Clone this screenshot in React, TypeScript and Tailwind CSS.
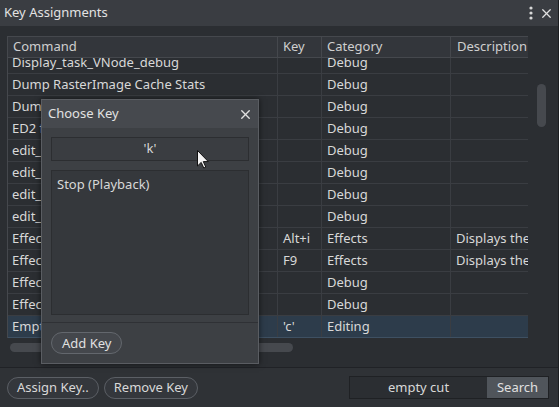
import { X } from "lucide-react";

type Row = { cmd: string; key?: string; cat: string; desc?: string; selected?: boolean };

const rows: Row[] = [
  { cmd: "Display_task_VNode_debug", cat: "Debug" },
  { cmd: "Dump RasterImage Cache Stats", cat: "Debug" },
  { cmd: "Dump RasterImage Cache", cat: "Debug" },
  { cmd: "ED2 fastpath", cat: "Debug" },
  { cmd: "edit_mode_1", cat: "Debug" },
  { cmd: "edit_mode_2", cat: "Debug" },
  { cmd: "edit_mode_3", cat: "Debug" },
  { cmd: "edit_mode_4", cat: "Debug" },
  { cmd: "Effects Editor", key: "Alt+i", cat: "Effects", desc: "Displays the effects editor" },
  { cmd: "Effects Manager", key: "F9", cat: "Effects", desc: "Displays the effects manager" },
  { cmd: "Effects Debug 1", cat: "Debug" },
  { cmd: "Effects Debug 2", cat: "Debug" },
  { cmd: "Empty Cut", key: "'c'", cat: "Editing", selected: true },
];

const cols = "grid grid-cols-[270px_44px_129px_78px]";

export default function App() {
  return (
    <div
      className="relative w-[559px] h-[407px] overflow-hidden bg-[#2b2e32] text-[13px] text-[#d8d8d8] flex flex-col border-r border-[#1c1e21]"
      style={{ fontFamily: '"Noto Sans", "Open Sans", sans-serif' }}
    >
      {/* title bar */}
      <div className="h-[26px] shrink-0 bg-[#3a3d42] flex items-center justify-between pl-[4px] pr-[4px]">
        <span className="text-[13px] text-[#e2e2e2]">Key Assignments</span>
        <div className="flex items-center gap-[6px] text-[#e0e0e0]">
          <svg width="4" height="14" viewBox="0 0 4 14">
            <circle cx="2" cy="2" r="1.6" fill="#d8d8d8" />
            <circle cx="2" cy="7" r="1.6" fill="#d8d8d8" />
            <circle cx="2" cy="12" r="1.6" fill="#d8d8d8" />
          </svg>
          <X size={15} strokeWidth={2} />
        </div>
      </div>

      {/* table area */}
      <div className="flex-1 flex pl-[7px] pt-[10px]">
        <div className="w-[521px] flex flex-col">
          <div className="border-l border-t border-[#45484d] h-[302px] flex flex-col overflow-hidden">
            <div className={`${cols} h-[21px] shrink-0 bg-[#33363b] border-b border-[#45484d] text-[#cfcfcf]`}>
              <div className="pl-[5px] flex items-center border-r border-[#45484d]">Command</div>
              <div className="pl-[5px] flex items-center border-r border-[#45484d]">Key</div>
              <div className="pl-[5px] flex items-center border-r border-[#45484d]">Category</div>
              <div className="pl-[6px] flex items-center">Description</div>
            </div>
            <div className="flex-1 overflow-hidden">
              <div className="-mt-[6px]">
                {rows.map((r, i) => (
                  <div
                    key={i}
                    className={`${cols} h-[22px] border-b ${r.selected ? "bg-[#2d3c4b] border-[#3e5062]" : "border-[#3a3d42]"}`}
                  >
                    <div className="pl-[4px] flex items-center border-r border-[#3a3d42] whitespace-nowrap overflow-hidden">{r.cmd}</div>
                    <div className="pl-[5px] flex items-center border-r border-[#3a3d42] whitespace-nowrap overflow-hidden">{r.key}</div>
                    <div className="pl-[5px] flex items-center border-r border-[#3a3d42]">{r.cat}</div>
                    <div className="pl-[5px] flex items-center whitespace-nowrap overflow-hidden">{r.desc}</div>
                  </div>
                ))}
              </div>
            </div>
          </div>
          {/* horizontal scrollbar */}
          <div className="h-[18px] flex items-center pl-[3px]">
            <div className="w-[283px] h-[9px] rounded-full bg-[#46494e]" />
          </div>
        </div>
        {/* vertical scrollbar */}
        <div className="w-[24px] pt-[48px] flex justify-center pl-[2px]">
          <div className="w-[9px] h-[43px] rounded-full bg-[#46494e]" />
        </div>
      </div>

      {/* bottom bar */}
      <div className="h-[40px] shrink-0 border-t border-[#202226] bg-[#2f3236] flex items-center justify-between pl-[7px] pr-[9px]">
        <div className="flex gap-[5px]">
          <button className="h-[22px] px-[9px] rounded-full border border-[#5b5f65] bg-[#34373c] text-[#d8d8d8] leading-none">Assign Key..</button>
          <button className="h-[22px] px-[9px] rounded-full border border-[#5b5f65] bg-[#34373c] text-[#d8d8d8] leading-none">Remove Key</button>
        </div>
        <div className="flex h-[23px] border border-[#1f2124]">
          <div className="w-[137px] bg-[#2b2e32] flex items-center justify-center text-[#d8d8d8]">empty cut</div>
          <div className="w-[61px] bg-[#50555b] flex items-center justify-center text-[#e0e0e0]">Search</div>
        </div>
      </div>

      {/* Choose Key dialog */}
      <div className="absolute left-[41px] top-[99px] w-[218px] h-[265px] bg-[#3d4044] border border-[#5a5d62] shadow-[0_0_6px_rgba(0,0,0,0.6)] flex flex-col">
        <div className="h-[28px] shrink-0 bg-[#46494e] flex items-center justify-between pl-[6px] pr-[5px]">
          <span className="text-[13px] text-[#e2e2e2]">Choose Key</span>
          <X size={15} strokeWidth={2.2} className="text-[#e0e0e0]" />
        </div>
        <div className="flex-1 flex flex-col px-[9px] pt-[9px]">
          <div className="h-[24px] shrink-0 bg-[#3a3d41] border border-[#2c2e31] flex items-center justify-center text-[#d8d8d8]">'k'</div>
          <div className="mt-[9px] h-[145px] bg-[#35383c] border border-[#2c2e31] pl-[5px] pt-[4px] text-[#d8d8d8]">Stop (Playback)</div>
        </div>
        <div className="h-[41px] shrink-0 border-t border-[#2f3135] flex items-center pl-[9px]">
          <button className="h-[22px] px-[10px] rounded-full border border-[#63676d] bg-[#44474c] text-[#e0e0e0] leading-none">Add Key</button>
        </div>
      </div>

      {/* mouse cursor */}
      <svg className="absolute left-[197px] top-[150px]" width="12" height="19" viewBox="0 0 12 19">
        <path d="M0.5 0.5 L0.5 16 L4.2 12.4 L6.8 18 L8.8 17.1 L6.3 11.6 L11.3 11.6 Z" fill="#f4f4f4" stroke="#111" strokeWidth="1" />
      </svg>
    </div>
  );
}
